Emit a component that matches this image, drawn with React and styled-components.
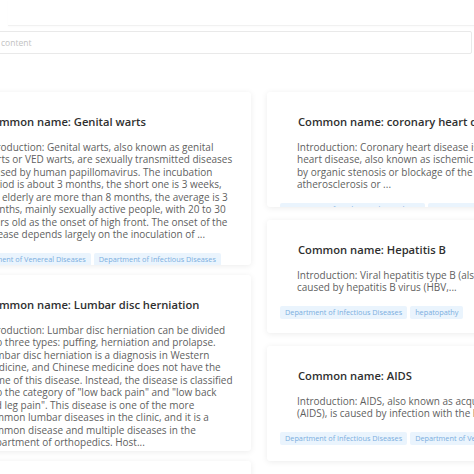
import React from "react";
import styled, { createGlobalStyle } from "styled-components";

const Global = createGlobalStyle`
  html, body { margin: 0; padding: 0; background: #ffffff; overflow: hidden; }
  body { font-family: "Open Sans", "Liberation Sans", sans-serif; }
`;

const Page = styled.div`
  margin-left: -46px;
  width: 610px;
`;

const TopBar = styled.div`
  height: 25px;
  margin-left: 54px;
  border-bottom: 1px solid #f1f1f1;
  box-shadow: 0 1px 2px rgba(0, 0, 0, 0.02);
`;

const SearchInput = styled.input`
  display: block;
  box-sizing: border-box;
  margin-top: 5px;
  width: 518px;
  height: 23px;
  border: 1px solid #e9e9e9;
  border-radius: 2px;
  padding: 0 0 0 46px;
  font-family: "Open Sans", "Liberation Sans", sans-serif;
  font-size: 8.5px;
  outline: none;
  background: #fff;
  &::placeholder { color: #c2c2c2; }
`;

const Columns = styled.div`
  display: flex;
  gap: 16px;
  margin-top: 38px;
  align-items: flex-start;
`;

const Column = styled.div`
  display: flex;
  flex-direction: column;
  gap: ${(p) => p.$gap}px;
  width: 297px;
`;

const Card = styled.div`
  box-sizing: border-box;
  width: 297px;
  height: ${(p) => p.$h}px;
  overflow: hidden;
  background: #fff;
  border-radius: 3px;
  box-shadow: 0 1px 6px rgba(0, 0, 0, 0.08);
  padding: 22px 0 0 13px;
`;

const Body = styled.div`
  padding-left: 17px;
`;

const Title = styled.div`
  font-size: 11.2px;
  font-weight: 600;
  color: #2f2f2f;
  line-height: 16px;
  margin-bottom: 10.5px;
  white-space: nowrap;
  margin-left: 1px;
`;

const Line = styled.div`
  font-size: 10px;
  color: #5f5f5f;
  line-height: 12.5px;
  white-space: nowrap;
`;

const Tags = styled.div`
  display: flex;
  gap: 3px;
  margin-top: 12px;
`;

const Tag = styled.span`
  display: inline-block;
  height: 13px;
  line-height: 13px;
  padding: 0 5px;
  font-size: 7.3px;
  color: #7aaee0;
  background: #eaf4fd;
  border-radius: 2px;
  white-space: nowrap;
`;

const left = [
  {
    h: 173,
    title: "Common name: Genital warts",
    lines: [
      "Introduction: Genital warts, also known as genital",
      "warts or VED warts, are sexually transmitted diseases",
      "caused by human papillomavirus. The incubation",
      "period is about 3 months, the short one is 3 weeks,",
      "the elderly are more than 8 months, the average is 3",
      "months, mainly sexually active people, with 20 to 30",
      "years old as the onset of high front. The onset of the",
      "disease depends largely on the inoculation of ...",
    ],
    tags: ["Department of Venereal Diseases", "Department of Infectious Diseases"],
  },
  {
    h: 176,
    title: "Common name: Lumbar disc herniation",
    lines: [
      "Introduction: Lumbar disc herniation can be divided",
      "into three types: puffing, herniation and prolapse.",
      "Lumbar disc herniation is a diagnosis in Western",
      "medicine, and Chinese medicine does not have the",
      "name of this disease. Instead, the disease is classified",
      "into the category of \"low back pain\" and \"low back",
      "and leg pain\". This disease is one of the more",
      "common lumbar diseases in the clinic, and it is a",
      "common disease and multiple diseases in the",
      "department of orthopedics. Host...",
    ],
    tags: ["Department of Orthopedics"],
  },
  {
    h: 120,
    title: "Common name: Hypertension",
    lines: ["Introduction: Hypertension is a clinical syndrome ..."],
    tags: ["Department of Cardiology"],
  },
];

const right = [
  {
    h: 115,
    title: "Common name: coronary heart disease",
    lines: [
      "Introduction: Coronary heart disease is the abbreviation of coronary",
      "heart disease, also known as ischemic heart disease. It is caused",
      "by organic stenosis or blockage of the coronary arteries due to",
      "atherosclerosis or ...",
    ],
    tags: ["Department of Cardiovascular Medicine", "Department of Cardiology"],
  },
  {
    h: 113,
    title: "Common name: Hepatitis B",
    lines: [
      "Introduction: Viral hepatitis type B (also known as hepatitis B) is a disease",
      "caused by hepatitis B virus (HBV,...",
    ],
    tags: ["Department of Infectious Diseases", "hepatopathy"],
  },
  {
    h: 115,
    title: "Common name: AIDS",
    lines: [
      "Introduction: AIDS, also known as acquired immunodeficiency syndrome",
      "(AIDS), is caused by infection with the human immunodeficiency virus",
    ],
    tags: ["Department of Infectious Diseases", "Department of Venereal Diseases"],
  },
];

function DiseaseCard({ item }) {
  return (
    <Card $h={item.h}>
      <Body>
        <Title>{item.title}</Title>
        {item.lines.map((l, i) => (
          <Line key={i}>{l}</Line>
        ))}
      </Body>
      <Tags>
        {item.tags.map((t) => (
          <Tag key={t}>{t}</Tag>
        ))}
      </Tags>
    </Card>
  );
}

export default function App() {
  return (
    <>
      <Global />
      <Page>
        <TopBar />
        <SearchInput placeholder="content" />
        <Columns>
          <Column $gap={10}>
            {left.map((c) => (
              <DiseaseCard key={c.title} item={c} />
            ))}
          </Column>
          <Column $gap={13}>
            {right.map((c) => (
              <DiseaseCard key={c.title} item={c} />
            ))}
          </Column>
        </Columns>
      </Page>
    </>
  );
}
